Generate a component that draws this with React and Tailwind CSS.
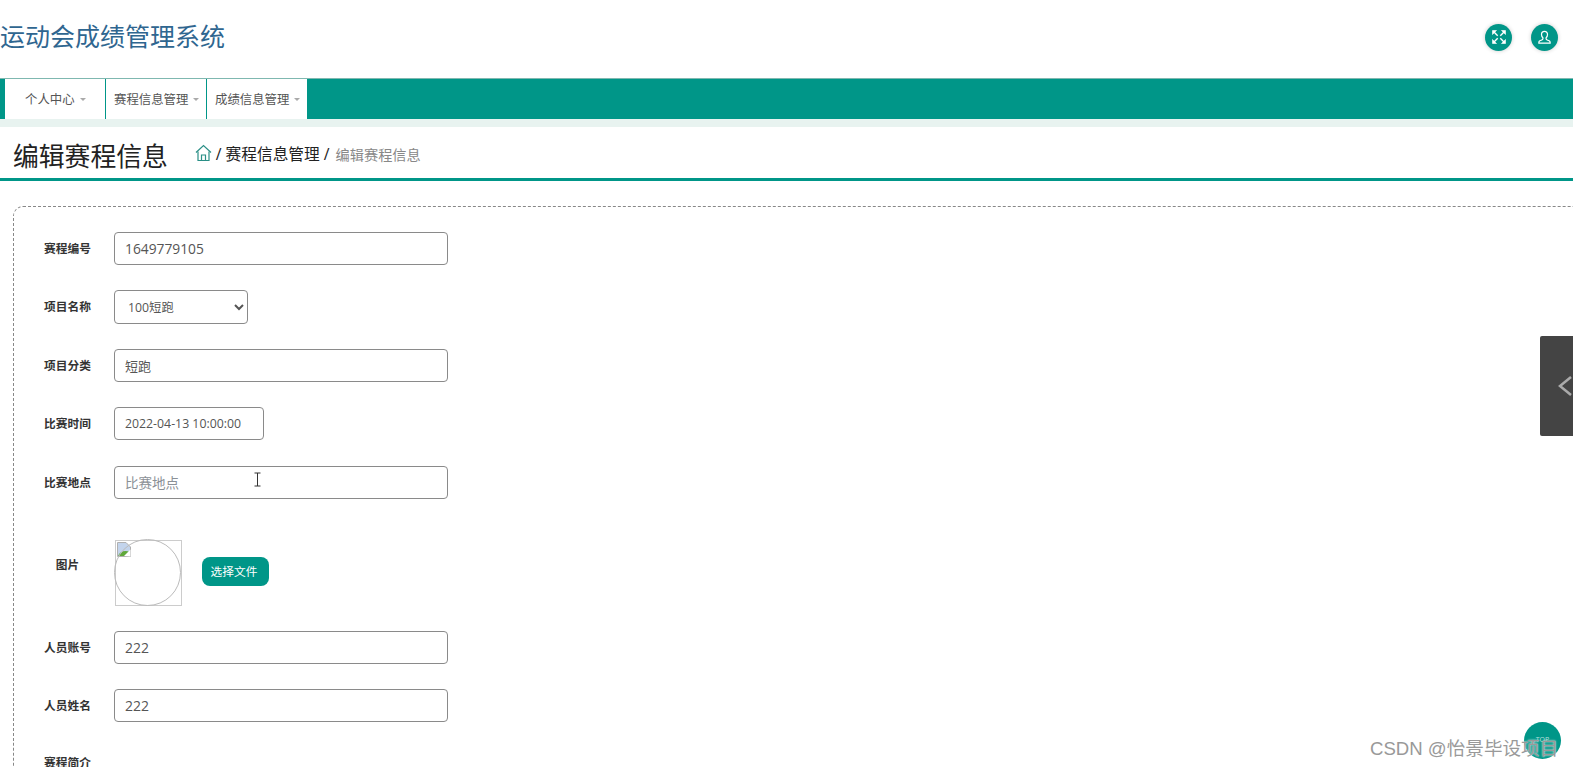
import React from "react";

const font = { fontFamily: '"Open Sans", "Noto Sans CJK SC", sans-serif' };

function NavItem({ label, className }) {
  return (
    <div className={`flex items-center bg-white pt-[2px] text-[12.4px] text-[#555] ${className}`}>
      <span>{label}</span>
      <span className="ml-[5px] mb-[2px] h-0 w-0 border-x-[3px] border-t-[3px] border-x-transparent border-t-[#aaa]" />
    </div>
  );
}

function Row({ label, children, className = "", labelClass = "" }) {
  return (
    <div className={`flex items-center ${className}`}>
      <label className={`w-[100px] shrink-0 pl-[7px] text-center text-[11.7px] font-bold text-[#333] ${labelClass}`}>{label}</label>
      {children}
    </div>
  );
}

const inputCls =
  "h-[33px] rounded-[4px] border border-[#8a8a8a] bg-white px-[10px] text-[#555] outline-none placeholder:text-[#8b9096]";

export default function App() {
  return (
    <div className="relative h-[767px] w-[1573px] overflow-hidden bg-white" style={font}>
      <header className="flex h-[78px] items-center justify-between">
        <h1 className="pb-[4px] text-[25px] font-normal text-[#2f6690]">运动会成绩管理系统</h1>
        <div className="mb-[4px] mr-[15px] flex gap-[19px]">
          <span className="flex h-[27px] w-[27px] items-center justify-center rounded-full bg-[#009688] text-white shadow-[0_0_4px_rgba(0,0,0,0.2)]">
            <svg width="16" height="16" viewBox="0 0 16 16" fill="none" stroke="currentColor" strokeWidth="1.4">
              <path d="M3 3 6.7 6.7M13 3 9.3 6.7M3 13 6.7 9.3M13 13 9.3 9.3" />
              <path d="M1.5 5.5V1.5H5.5ZM10.5 1.5H14.5V5.5ZM1.5 10.5V14.5H5.5ZM14.5 10.5V14.5H10.5Z" fill="currentColor" strokeWidth="0.6" />
            </svg>
          </span>
          <span className="flex h-[27px] w-[27px] items-center justify-center rounded-full bg-[#009688] text-white shadow-[0_0_4px_rgba(0,0,0,0.2)]">
            <svg width="15" height="15" viewBox="0 0 16 16" fill="none" stroke="currentColor" strokeWidth="1.3">
              <path d="M8 1.5c-2 0-3.2 1.4-3.2 3.3 0 1.4.6 2.7 1.5 3.4v1.2c0 .6-.5.9-1.2 1.2l-2 .9c-.8.4-1.1 1-1.1 1.6v.9h12v-.9c0-.6-.3-1.2-1.1-1.6l-2-.9c-.7-.3-1.2-.6-1.2-1.2V8.2c.9-.7 1.5-2 1.5-3.4C11.2 2.9 10 1.5 8 1.5z" />
            </svg>
          </span>
        </div>
      </header>

      <nav className="flex h-[41px] gap-px border-t border-[#7fb8b0] bg-[#009688] pl-[5px]">
        <NavItem label="个人中心" className="w-[100px] pl-[20px]" />
        <NavItem label="赛程信息管理" className="w-[100px] pl-[8px]" />
        <NavItem label="成绩信息管理" className="w-[100px] pl-[8px]" />
      </nav>
      <div className="h-[8px] bg-[#e8f3f0]" />

      <div className="flex h-[54px] items-center border-b-[3px] border-[#009688] pl-[13px] pt-[4px]">
        <h2 className="pt-[4px] text-[25.8px] font-normal text-[#222]">编辑赛程信息</h2>
        <svg className="ml-[27px] mb-[3px] text-[#2a8f86]" width="17" height="18" viewBox="0 0 17 18" fill="none" stroke="currentColor" strokeWidth="1.2">
          <path d="M1 8.5 8.5 1.5 16 8.5" />
          <path d="M3 7.5V16.5H14V7.5" />
          <path d="M6.5 16.5V11H10.5V16.5" />
        </svg>
        <span className="ml-[4px] text-[15.7px] text-[#222]">/ 赛程信息管理 /</span>
        <span className="ml-[6px] text-[14.2px] text-[#888]">编辑赛程信息</span>
      </div>

      <main className="ml-[13px] mt-[25px] w-[1600px] rounded-tl-[10px] border border-dashed border-[#888] pt-[25px]">
        <div className="flex flex-col gap-[25px]">
          <Row label="赛程编号">
            <input readOnly defaultValue="1649779105" className={`${inputCls} w-[334px] text-[13.8px]`} />
          </Row>
          <Row label="项目名称">
            <select defaultValue="100短跑" className="h-[34px] w-[134px] rounded-[4px] border border-[#8a8a8a] bg-white pl-[9px] text-[12.3px] text-[#555] outline-none">
              <option>100短跑</option>
            </select>
          </Row>
          <Row label="项目分类">
            <input readOnly defaultValue="短跑" className={`${inputCls} w-[334px] text-[13px]`} />
          </Row>
          <Row label="比赛时间">
            <input readOnly defaultValue="2022-04-13 10:00:00" className={`${inputCls} w-[150px] text-[12.3px]`} />
          </Row>
          <Row label="比赛地点" className="pt-px">
            <input readOnly placeholder="比赛地点" className={`${inputCls} w-[334px] text-[13.5px]`} />
          </Row>
          <Row label="图片" className="mt-[16px] items-start" labelClass="mt-[16px]">
            <div className="relative ml-px h-[66px] w-[67px] border border-[#ccc]">
              <svg className="absolute left-[1px] top-[1px]" width="14" height="15" viewBox="0 0 14 15">
                <path d="M0.5 0.5H9L13.5 5V14.5H0.5Z" fill="#c3d4ec" stroke="#b0b0b0" />
                <path d="M1 14C3 9 8 8 13 10V14Z" fill="#5fa83a" />
                <path d="M7 14 13.5 7.5V14.5Z" fill="#fff" />
              </svg>
              <div className="absolute left-[-2px] top-[-2px] h-[67px] w-[67px] rounded-full border border-[#bbb]" />
            </div>
            <button className="ml-[20px] mt-[17px] h-[29px] w-[67px] rounded-[8px] bg-[#009688] pr-[3px] text-[11.7px] text-white">选择文件</button>
          </Row>
          <Row label="人员账号">
            <input readOnly defaultValue="222" className={`${inputCls} w-[334px] text-[14px]`} />
          </Row>
          <Row label="人员姓名">
            <input readOnly defaultValue="222" className={`${inputCls} w-[334px] text-[14px]`} />
          </Row>
          <Row label="赛程简介" className="mt-[7px]" />
        </div>
      </main>

      <svg className="absolute left-[253px] top-[472px]" width="9" height="15" viewBox="0 0 9 15" fill="none" stroke="#333" strokeWidth="1">
        <path d="M1.5 1H7.5M4.5 1V14M1.5 14H7.5" />
      </svg>

      <div className="absolute left-[1540px] top-[336px] flex h-[100px] w-[33px] items-center rounded-l-[2px] bg-[#444]">
        <svg className="ml-[18px]" width="15" height="22" viewBox="0 0 15 22" fill="none" stroke="#aaa" strokeWidth="2.5">
          <path d="M13 2 2 11l11 9" />
        </svg>
      </div>

      <div className="absolute left-[1524px] top-[722px] flex h-[37px] w-[37px] items-center justify-center rounded-full bg-[#009688] text-[7px] text-white/70">TOP</div>
      <div className="absolute left-[1370px] top-[737px] text-[18.6px] leading-[24px] text-[#999] [text-shadow:0_0_2px_#fff]" style={{ fontFamily: '"Liberation Sans", "Noto Sans CJK SC", sans-serif' }}>
        CSDN @怡景毕设项目
      </div>
    </div>
  );
}
